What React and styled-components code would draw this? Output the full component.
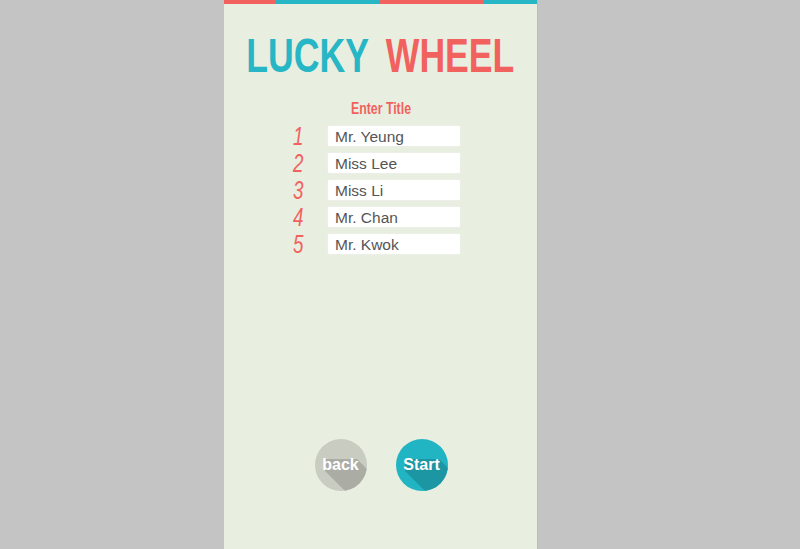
import React from "react";
import styled, { createGlobalStyle } from "styled-components";

const TEAL = "#26b6c5";
const RED = "#f1625e";

const Global = createGlobalStyle`
  html, body { margin: 0; padding: 0; background: #c4c4c4; }
  body { font-family: "Liberation Sans", Arial, sans-serif; }
`;

const Page = styled.div`
  display: flex;
  height: 549px;
  padding-left: 224px;
  box-sizing: border-box;
`;

const Panel = styled.div`
  width: 313px;
  height: 549px;
  background: #e8eee0;
  border-right: 1px solid #b9bcb4;
  display: flex;
  flex-direction: column;
  align-items: center;
`;

const TopBar = styled.div`
  align-self: stretch;
  display: flex;
  height: 4px;
`;

const Seg = styled.div`
  width: ${(p) => p.$w}px;
  background: ${(p) => p.$c};
`;

const Title = styled.h1`
  margin: 23px 0 0 0;
  font-family: "Liberation Sans", Arial, sans-serif;
  font-weight: bold;
  font-size: 49px;
  line-height: 56px;
  display: flex;
  gap: 23px;
  white-space: nowrap;
  transform: scaleX(0.727);
`;

const Word = styled.span`
  color: ${(p) => p.$c};
`;

const Label = styled.div`
  margin-top: 18px;
  font-family: "Liberation Sans", Arial, sans-serif;
  font-weight: bold;
  font-size: 16px;
  line-height: 16px;
  color: ${RED};
  transform: scaleX(0.77);
`;

const List = styled.div`
  margin-top: 8px;
  display: flex;
  flex-direction: column;
  gap: 5px;
`;

const Row = styled.div`
  display: flex;
  align-items: center;
`;

const Num = styled.span`
  width: 34px;
  margin-left: -7px;
  font-family: "Liberation Sans", Arial, sans-serif;
  font-style: italic;
  font-size: 25px;
  line-height: 22px;
  color: ${RED};
  transform: scaleX(0.75);
  transform-origin: left center;
`;

const Field = styled.div`
  width: 134px;
  height: 22px;
  box-sizing: border-box;
  background: #ffffff;
  border: 1px solid #eceee8;
  border-radius: 2px;
  padding-left: 7px;
  font-family: "Liberation Sans", Arial, sans-serif;
  font-size: 15.5px;
  line-height: 21px;
  color: #555555;
`;

const Buttons = styled.div`
  margin-top: auto;
  margin-bottom: 58px;
  display: flex;
  gap: 29px;
  margin-left: 1px;
`;

const Btn = styled.div`
  position: relative;
  width: 52px;
  height: 52px;
`;

const BtnText = styled.span`
  position: absolute;
  inset: 0;
  display: flex;
  align-items: center;
  justify-content: center;
  font-family: "Liberation Sans", Arial, sans-serif;
  font-weight: bold;
  font-size: 16px;
  color: #ffffff;
`;

function RoundButton({ label, fill, shade, hw, id }) {
  const L = 60;
  const x0 = -hw, x1 = hw, y0 = -6, y1 = 6;
  const pts = [
    [x0, y0], [x1, y0], [x1 + L, y0 + L], [x1 + L, y1 + L], [x0 + L, y1 + L], [x0, y1],
  ].map(([x, y]) => `${x + 26},${y + 26}`).join(" ");
  return (
    <Btn>
      <svg width="52" height="52" viewBox="0 0 52 52">
        <defs>
          <clipPath id={id}>
            <circle cx="26" cy="26" r="26" />
          </clipPath>
        </defs>
        <circle cx="26" cy="26" r="26" fill={fill} />
        <polygon points={pts} fill={shade} clipPath={`url(#${id})`} />
      </svg>
      <BtnText>{label}</BtnText>
    </Btn>
  );
}

const names = ["Mr. Yeung", "Miss Lee", "Miss Li", "Mr. Chan", "Mr. Kwok"];

export default function App() {
  return (
    <>
      <Global />
      <Page>
        <Panel>
          <TopBar>
            <Seg $w={51} $c={RED} />
            <Seg $w={105} $c={TEAL} />
            <Seg $w={104} $c={RED} />
            <Seg $w={53} $c={TEAL} />
          </TopBar>
          <Title>
            <Word $c={TEAL}>LUCKY</Word>
            <Word $c={RED}>WHEEL</Word>
          </Title>
          <Label>Enter Title</Label>
          <List>
            {names.map((n, i) => (
              <Row key={n}>
                <Num>{i + 1}</Num>
                <Field>{n}</Field>
              </Row>
            ))}
          </List>
          <Buttons>
            <RoundButton id="cb" label="back" fill="#c9ccc1" shade="#abada5" hw={16} />
            <RoundButton id="cs" label="Start" fill="#21b5c3" shade="#1c96a3" hw={17} />
          </Buttons>
        </Panel>
      </Page>
    </>
  );
}
